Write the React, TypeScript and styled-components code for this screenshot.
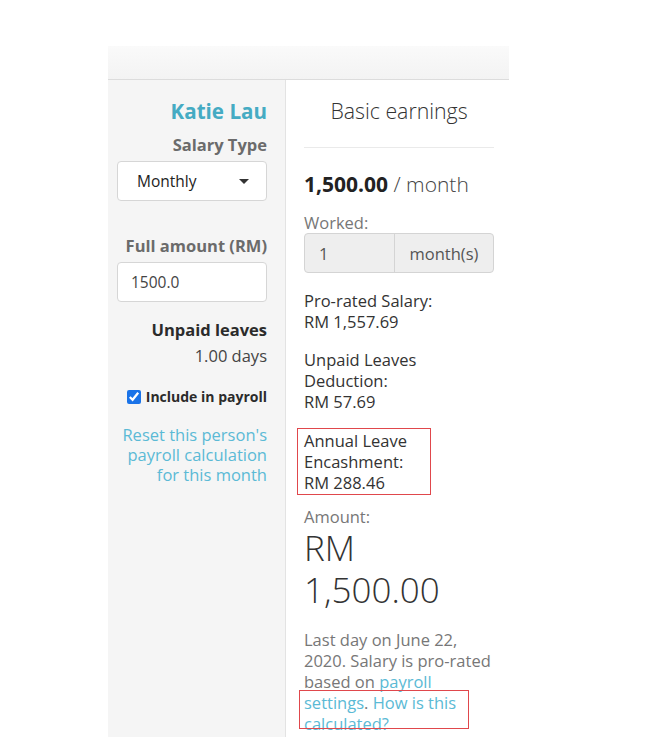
import React from "react";
import styled, { createGlobalStyle } from "styled-components";

const GlobalStyle = createGlobalStyle`
  html, body {
    margin: 0;
    padding: 0;
    background: #fff;
  }
  body {
    font-family: "Open Sans", "Liberation Sans", sans-serif;
    color: #333;
  }
`;

const Page = styled.div`
  padding: 46px 0 0 108px;
`;

const Frame = styled.div`
  width: 401px;
`;

const TopBar = styled.div`
  height: 33px;
  background: linear-gradient(#fafafa, #f3f3f3);
  border-bottom: 1px solid #dcdcdc;
`;

const Columns = styled.div`
  display: flex;
  height: 657px;
`;

const Sidebar = styled.aside`
  flex: 0 0 178px;
  box-sizing: border-box;
  padding: 17px 18px 0 9px;
  background: #f5f5f5;
  border-right: 1px solid #e3e3e3;
  text-align: right;
`;

const Name = styled.div`
  font-size: 20.6px;
  font-weight: 700;
  line-height: 28px;
  color: #45abc3;
`;

const FieldLabel = styled.div<{ $dark?: boolean; $gap: number }>`
  margin-top: ${(p) => p.$gap}px;
  font-size: 16.5px;
  font-weight: 700;
  line-height: 22px;
  color: ${(p) => (p.$dark ? "#2b2b2b" : "#6b6b6b")};
`;

const Box = styled.div`
  box-sizing: border-box;
  display: flex;
  align-items: center;
  justify-content: space-between;
  height: 40px;
  margin-top: 5px;
  background: #fff;
  border: 1px solid #d6d6d6;
  border-radius: 4px;
  font-size: 15.5px;
  text-align: left;
`;

const SelectBox = styled(Box)`
  padding: 0 17px 0 19px;
  color: #222;
`;

const Caret = styled.span`
  width: 0;
  height: 0;
  border-left: 5px solid transparent;
  border-right: 5px solid transparent;
  border-top: 5px solid #333;
`;

const InputBox = styled(Box)`
  padding: 0 13px;
  color: #444;
`;

const Days = styled.div`
  margin-top: 4px;
  font-size: 16.5px;
  line-height: 22px;
  color: #444;
`;

const CheckRow = styled.label`
  display: flex;
  justify-content: flex-end;
  align-items: center;
  gap: 5px;
  margin-top: 20px;
  font-size: 14px;
  font-weight: 700;
  color: #2b2b2b;
`;

const Check = styled.input`
  width: 14px;
  height: 14px;
  margin: 0;
  accent-color: #1a73e8;
`;

const ResetLink = styled.a`
  display: block;
  margin-top: 19px;
  font-size: 16.5px;
  line-height: 20px;
  color: #5bbad5;
  text-decoration: none;
`;

const Main = styled.section`
  flex: 1;
  padding: 16px 15px 0 18px;
  background: #fff;
`;

const Title = styled.h3`
  margin: 0;
  font-size: 21.3px;
  font-weight: 300;
  line-height: 30px;
  text-align: center;
  color: #333;
`;

const Rule = styled.hr`
  margin: 21px 0 0;
  border: 0;
  border-top: 1px solid #eaeaea;
`;

const Rate = styled.div`
  margin-top: 22px;
  font-size: 21px;
  line-height: 28px;
  color: #444;
  font-weight: 300;

  b {
    font-weight: 700;
    color: #222;
  }
`;

const Muted = styled.div<{ $gap: number }>`
  margin-top: ${(p) => p.$gap}px;
  font-size: 16.5px;
  line-height: 21px;
  color: #777;
`;

const InputGroup = styled.div`
  display: flex;
  height: 40px;
  box-sizing: border-box;
  border: 1px solid #d4d4d4;
  border-radius: 4px;
  background: #eee;
  font-size: 16.5px;
  color: #555;
`;

const GroupValue = styled.div`
  width: 90px;
  display: flex;
  align-items: center;
  padding-left: 14px;
  box-sizing: border-box;
  border-right: 1px solid #d4d4d4;
`;

const GroupAddon = styled.div`
  flex: 1;
  display: flex;
  align-items: center;
  justify-content: center;
`;

const Entry = styled.div<{ $gap: number; $marked?: boolean }>`
  margin-top: ${(p) => p.$gap}px;
  font-size: 16.5px;
  line-height: 21px;
  color: #333;
  ${(p) =>
    p.$marked &&
    `
    width: 120px;
    margin-left: -7px;
    padding: 1px 6px 1px 6px;
    border: 1px solid #e0474c;
  `}
`;

const Amount = styled.div`
  font-size: 35px;
  font-weight: 300;
  line-height: 42px;
  color: #333;
`;

const Note = styled.p`
  position: relative;
  margin: 18px 0 0;
  font-size: 16.5px;
  line-height: 21px;
  color: #777;

  a {
    color: #5bbad5;
    text-decoration: none;
  }
`;

const Marker = styled.span`
  position: absolute;
  left: -5px;
  top: 61px;
  width: 168px;
  height: 37px;
  border: 1px solid #e0474c;
  pointer-events: none;
`;

export default function App() {
  return (
    <>
      <GlobalStyle />
      <Page>
        <Frame>
          <TopBar />
          <Columns>
            <Sidebar>
              <Name>Katie Lau</Name>
              <FieldLabel $gap={9}>Salary Type</FieldLabel>
              <SelectBox>
                Monthly
                <Caret />
              </SelectBox>
              <FieldLabel $gap={34}>Full amount (RM)</FieldLabel>
              <InputBox>1500.0</InputBox>
              <FieldLabel $gap={17} $dark>
                Unpaid leaves
              </FieldLabel>
              <Days>1.00 days</Days>
              <CheckRow>
                <Check type="checkbox" defaultChecked />
                Include in payroll
              </CheckRow>
              <ResetLink href="#">
                Reset this person's payroll calculation for this month
              </ResetLink>
            </Sidebar>
            <Main>
              <Title>Basic earnings</Title>
              <Rule />
              <Rate>
                <b>1,500.00</b> / month
              </Rate>
              <Muted $gap={14}>Worked:</Muted>
              <InputGroup>
                <GroupValue>1</GroupValue>
                <GroupAddon>month(s)</GroupAddon>
              </InputGroup>
              <Entry $gap={17}>
                Pro-rated Salary:
                <br />
                RM 1,557.69
              </Entry>
              <Entry $gap={17}>
                Unpaid Leaves Deduction:
                <br />
                RM 57.69
              </Entry>
              <Entry $gap={16} $marked>
                Annual Leave Encashment:
                <br />
                RM 288.46
              </Entry>
              <Muted $gap={11}>Amount:</Muted>
              <Amount>RM 1,500.00</Amount>
              <Note>
                Last day on June 22, 2020. Salary is pro-rated based on{" "}
                <a href="#">payroll settings</a>.{" "}
                <a href="#">How is this calculated?</a>
                <Marker />
              </Note>
            </Main>
          </Columns>
        </Frame>
      </Page>
    </>
  );
}
